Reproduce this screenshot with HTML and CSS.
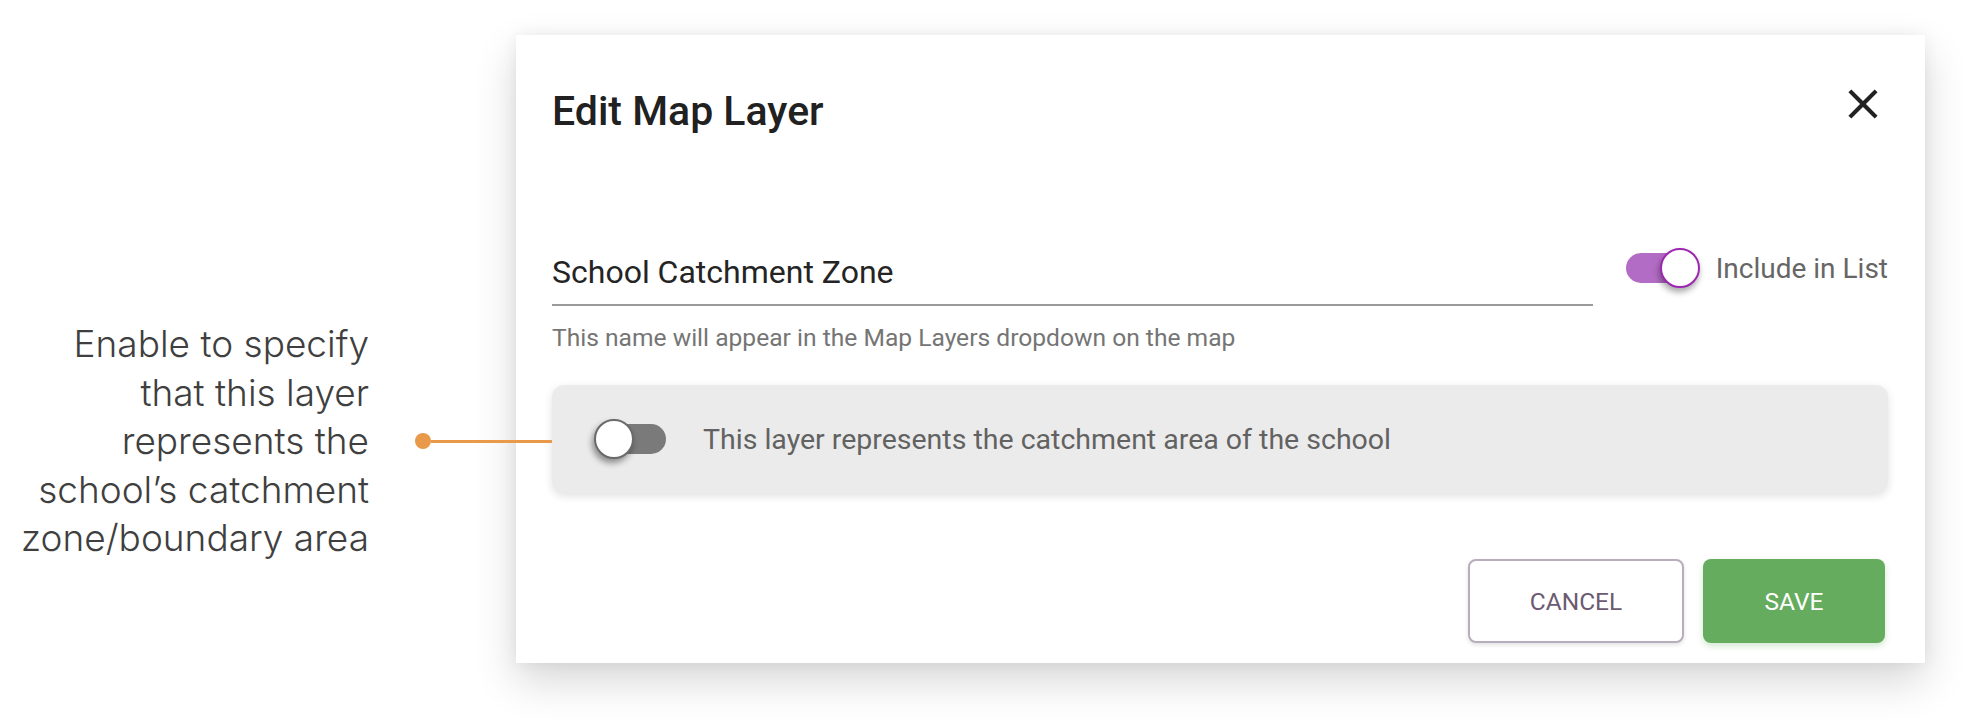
FILE: index.html
```html
<!DOCTYPE html>
<html lang="en">
<head>
    <meta charset="UTF-8">
    <meta name="viewport" content="width=device-width, initial-scale=1.0">
    <title>Edit Map Layer</title>
    <link rel="stylesheet" href="styles.css">
</head>
<body>
    <div id="page">
        <div class="note">
            Enable to specify<br>
            that this layer<br>
            represents the<br>
            school&rsquo;s catchment<br>
            zone/boundary area
        </div>

        <div class="dialog">
            <div class="dialog-header">
                <h1>Edit Map Layer</h1>
                <button class="close" aria-label="Close">
                    <svg viewBox="0 0 24 24" width="50" height="50">
                        <path d="M19 6.41L17.59 5 12 10.59 6.41 5 5 6.41 10.59 12 5 17.59 6.41 19 12 13.41 17.59 19 19 17.59 13.41 12z" fill="#222222"/>
                    </svg>
                </button>
            </div>

            <div class="field-row">
                <div class="field">
                    <div class="input">School Catchment Zone</div>
                    <div class="hint">This name will appear in the Map Layers dropdown on the map</div>
                </div>
                <label class="switch-label">
                    <span class="switch on"><span class="thumb"></span></span>
                    Include in List
                </label>
            </div>

            <div class="panel">
                <div class="callout"><span class="dot"></span><span class="line"></span></div>
                <span class="switch off"><span class="thumb"></span></span>
                <span class="panel-text">This layer represents the catchment area of the school</span>
            </div>

            <div class="actions">
                <button class="btn btn-cancel">CANCEL</button>
                <button class="btn btn-save">SAVE</button>
            </div>
        </div>
    </div>
</body>
</html>
```
FILE: styles.css
```css
body {
    margin: 0;
    background-color: #ffffff;
    font-family: Roboto, "Noto Sans", sans-serif;
}
#page {
    display: flex;
    align-items: flex-start;
    width: 1984px;
    height: 726px;
    overflow: hidden;
}
.note {
    width: 369px;
    margin-top: 320px;
    text-align: right;
    font-family: Inter, "Liberation Sans", sans-serif;
    font-weight: 300;
    font-size: 37px;
    line-height: 48.5px;
    color: #3f3f3f;
}
.dialog {
    width: 1409px;
    margin-left: 147px;
    margin-top: 35px;
    padding: 52px 37px 20px 36px;
    box-sizing: border-box;
    background-color: #ffffff;
    box-shadow: 0 18px 40px rgba(0, 0, 0, 0.16), 0 0 14px rgba(0, 0, 0, 0.06);
}
.dialog-header {
    display: flex;
    align-items: center;
    justify-content: space-between;
    height: 48px;
}
.dialog-header h1 {
    margin: 0;
    font-size: 41px;
    line-height: 48px;
    font-weight: 500;
    color: #212121;
}
.close {
    border: none;
    background: none;
    padding: 0;
    width: 50px;
    height: 50px;
    margin: -22px 0 -8px 0;
    cursor: pointer;
}
.close svg {
    display: block;
}
.field-row {
    display: flex;
    align-items: flex-start;
    gap: 33px;
    margin-top: 113px;
}
.field {
    flex: 1;
}
.input {
    padding-top: 4px;
    padding-bottom: 12px;
    font-size: 32px;
    line-height: 40px;
    color: #242424;
    border-bottom: 2px solid #9a9a9a;
}
.hint {
    margin-top: 17px;
    font-size: 24.6px;
    line-height: 30px;
    color: #757575;
}
.switch-label {
    display: flex;
    align-items: center;
    gap: 16px;
    font-size: 28px;
    color: #666666;
    height: 40px;
}
.switch {
    position: relative;
    display: inline-block;
    width: 74px;
    height: 40px;
    flex-shrink: 0;
}
.switch::before {
    content: "";
    position: absolute;
    left: 0;
    right: 4px;
    top: 5px;
    height: 30px;
    border-radius: 15px;
}
.switch .thumb {
    position: absolute;
    top: 0;
    width: 40px;
    height: 40px;
    box-sizing: border-box;
    border-radius: 50%;
    background-color: #ffffff;
    border: 2px solid #9c27b0;
}
.switch.on::before {
    background-color: #b36cc5;
}
.switch.on .thumb {
    right: 0;
    box-shadow: -1px 4px 6px rgba(0, 0, 0, 0.35);
}
.switch.off {
    width: 72px;
}
.switch.off::before {
    left: 8px;
    right: 0;
    background-color: #7a7a7a;
}
.switch.off .thumb {
    left: 0;
    border-color: #6a6a6a;
    box-shadow: -2px 4px 6px rgba(0, 0, 0, 0.4);
}
.panel {
    position: relative;
    display: flex;
    align-items: center;
    gap: 37px;
    margin-top: 32px;
    height: 108px;
    padding-left: 42px;
    border-radius: 12px;
    background-color: #ebebeb;
    box-shadow: 0 3px 8px rgba(0, 0, 0, 0.12);
}
.panel-text {
    font-size: 28.5px;
    color: #626262;
}
.callout {
    position: absolute;
    right: 100%;
    top: 50%;
    width: 137px;
    height: 16px;
    margin-top: -6px;
    display: flex;
    align-items: center;
}
.callout .dot {
    width: 16px;
    height: 16px;
    border-radius: 50%;
    background-color: #e8994a;
    flex-shrink: 0;
}
.callout .line {
    flex: 1;
    height: 3px;
    background-color: #e8994a;
}
.actions {
    display: flex;
    justify-content: flex-end;
    gap: 19px;
    margin-top: 66px;
    padding-right: 3px;
}
.btn {
    height: 84px;
    border-radius: 8px;
    font-family: Roboto, sans-serif;
    font-size: 24.5px;
    cursor: pointer;
}
.btn-cancel {
    width: 216px;
    background-color: #ffffff;
    color: #6b5a70;
    border: 2px solid #b8adbc;
    box-shadow: 0 2px 4px rgba(0, 0, 0, 0.12);
}
.btn-save {
    width: 182px;
    background-color: #65ac5e;
    color: #ffffff;
    border: none;
    box-shadow: 0 3px 6px rgba(80, 160, 70, 0.25);
}
```
